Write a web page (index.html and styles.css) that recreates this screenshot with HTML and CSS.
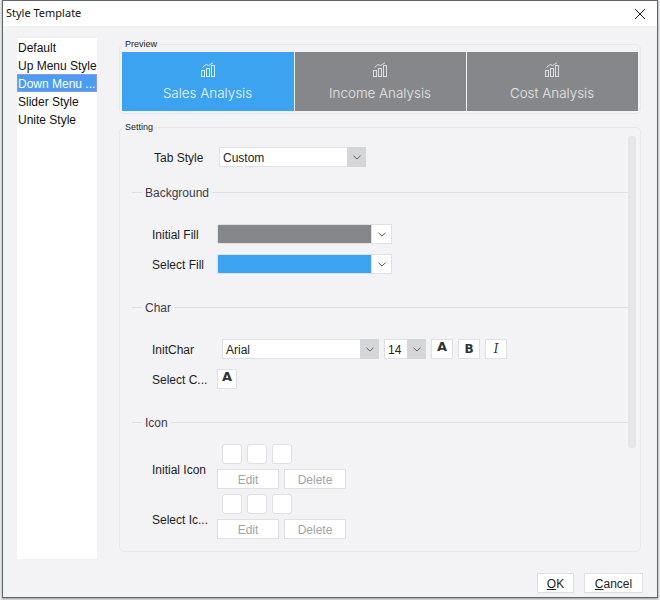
FILE: index.html
```html
<!DOCTYPE html>
<html lang="en">
<head>
<meta charset="utf-8">
<title>Style Template</title>
<link rel="stylesheet" href="styles.css">
</head>
<body>
<svg class="defs" width="0" height="0" aria-hidden="true">
  <symbol id="chart" viewBox="0 0 14 15">
    <path d="M1.5 5.5 L5 2.5 L7.5 3.5 L12 0.8" fill="none" stroke="currentColor" stroke-width="1"/>
    <rect x="0.5" y="8.5" width="3" height="6" fill="none" stroke="currentColor"/>
    <rect x="5.5" y="6.5" width="3" height="8" fill="none" stroke="currentColor"/>
    <rect x="10.5" y="3.5" width="3" height="11" fill="none" stroke="currentColor"/>
  </symbol>
  <symbol id="chev" viewBox="0 0 9 5">
    <path d="M0.5 0.5 L4.5 4.2 L8.5 0.5" fill="none" stroke="currentColor" stroke-width="1"/>
  </symbol>
</svg>
<div class="window">
  <header class="titlebar">
    <span class="title">Style Template</span>
    <svg class="close" width="12" height="12" viewBox="0 0 12 12"><path d="M1 1 L11 11 M11 1 L1 11" stroke="#111" stroke-width="1" fill="none"/></svg>
  </header>
  <div class="body">
    <div class="main">
      <ul class="list">
        <li>Default</li>
        <li>Up Menu Style</li>
        <li class="selected">Down Menu ...</li>
        <li>Slider Style</li>
        <li>Unite Style</li>
      </ul>
      <div class="panels">
        <section class="group preview">
          <span class="legend">Preview</span>
          <div class="tabs">
            <div class="tab active"><svg class="tab-icon"><use href="#chart"/></svg><span>Sales Analysis</span></div>
            <div class="tab"><svg class="tab-icon"><use href="#chart"/></svg><span>Income Analysis</span></div>
            <div class="tab"><svg class="tab-icon"><use href="#chart"/></svg><span>Cost Analysis</span></div>
          </div>
        </section>
        <section class="group setting">
          <span class="legend">Setting</span>
          <div class="thumb"></div>
          <div class="row row-tabstyle">
            <label class="lbl">Tab Style</label>
            <div class="select w-tabstyle"><span class="val">Custom</span><span class="arrow"><svg class="chev"><use href="#chev"/></svg></span></div>
          </div>
          <div class="head head-first"><span>Background</span></div>
          <div class="row after-head">
            <label class="lbl">Initial Fill</label>
            <div class="swatch gray"></div>
            <div class="drop"><svg class="chev"><use href="#chev"/></svg></div>
          </div>
          <div class="row next">
            <label class="lbl">Select Fill</label>
            <div class="swatch blue"></div>
            <div class="drop"><svg class="chev"><use href="#chev"/></svg></div>
          </div>
          <div class="head"><span>Char</span></div>
          <div class="row after-head">
            <label class="lbl">InitChar</label>
            <div class="select w-font"><span class="val">Arial</span><span class="arrow"><svg class="chev"><use href="#chev"/></svg></span></div>
            <div class="select w-size"><span class="val">14</span><span class="arrow"><svg class="chev"><use href="#chev"/></svg></span></div>
            <button class="fmt fmt-a">A</button>
            <button class="fmt fmt-b">B</button>
            <button class="fmt fmt-i">I</button>
          </div>
          <div class="row next">
            <label class="lbl">Select C...</label>
            <button class="fmt fmt-a fmt-single">A</button>
          </div>
          <div class="head"><span>Icon</span></div>
          <div class="icon-row icon-first">
            <label class="lbl">Initial Icon</label>
            <div class="icon-ctl">
              <div class="slots"><i></i><i></i><i></i></div>
              <div class="actions"><button class="act edit">Edit</button><button class="act del">Delete</button></div>
            </div>
          </div>
          <div class="icon-row">
            <label class="lbl">Select Ic...</label>
            <div class="icon-ctl">
              <div class="slots"><i></i><i></i><i></i></div>
              <div class="actions"><button class="act edit">Edit</button><button class="act del">Delete</button></div>
            </div>
          </div>
        </section>
      </div>
    </div>
    <footer class="footer">
      <button class="dlg ok"><u>O</u>K</button>
      <button class="dlg cancel"><u>C</u>ancel</button>
    </footer>
  </div>
</div>
</body>
</html>
```
FILE: styles.css
```css
* { box-sizing: border-box; }
html, body { margin: 0; padding: 0; }
body {
  width: 660px;
  height: 600px;
  background: #e9ebec;
  font: 12px/20px "Liberation Sans", Arial, sans-serif;
  color: #1c1c1f;
  overflow: hidden;
}
.defs { position: absolute; }
.window {
  margin-left: 2px;
  width: 656px;
  height: 598px;
  border: 1px solid #5f6568;
  background: #f3f3f5;
  display: flex;
  flex-direction: column;
  box-shadow: 0 1px 2px rgba(0, 0, 0, .35);
}
.titlebar {
  height: 25px;
  background: #fff;
  display: flex;
  align-items: center;
  justify-content: space-between;
  padding: 0 11px 2px 3px;
  flex: none;
}
.title { font-family: "Noto Sans", sans-serif; font-size: 11px; color: #111; }
.close { margin-top: 2px; }
.body { flex: 1; display: flex; flex-direction: column; }
.main { display: flex; padding: 12px 0 0 14px; gap: 22px; }
.list {
  list-style: none;
  margin: 0;
  padding: 0;
  width: 80px;
  height: 521px;
  background: #fff;
}
.list li { height: 18px; line-height: 18px; padding: 1px 0 0 1px; color: #111; white-space: nowrap; }
.list li.selected { background: #4c9cf4; color: #fff; box-shadow: inset 0 0 0 1px #8c9ae0; }
.panels { width: 522px; }
.group {
  position: relative;
  border: 1px solid #e8e8eb;
  border-radius: 5px;
}
.legend {
  position: absolute;
  left: 4px;
  top: -7px;
  padding: 0 1px;
  background: #f3f3f5;
  font-size: 9px;
  line-height: 12px;
  color: #222;
}
.preview { margin-top: 6px; height: 70px; padding: 7px 2px 0; }
.tabs { display: flex; gap: 1px; height: 59px; width: 516px; }
.tab {
  flex: 1;
  background: #85878b;
  color: #e6e7e9;
  display: flex;
  flex-direction: column;
  align-items: center;
  padding-top: 10px;
  font: 300 13.4px/18px Inter, sans-serif;
}
.tab span { margin-right: 1px; }
.tab.active { flex: none; width: 172px; background: #3ca3f0; color: #eef7fe; }
.tab-icon { width: 14px; height: 15px; margin: 0 1px 7px 0; opacity: .9; }
.setting { margin-top: 13px; height: 425px; padding: 19px 0 0 12px; }
.thumb {
  position: absolute;
  left: 508px;
  top: 8px;
  width: 8px;
  height: 312px;
  border-radius: 3px;
  background: #e6e6e8;
}
.row { display: flex; align-items: center; height: 20px; padding-left: 20px; width: 496px; }
.row-tabstyle { padding-left: 22px; }
.lbl { width: 65px; flex: none; padding-top: 1px; white-space: nowrap; color: #1c1c22; }
.next { margin-top: 10px; }
.after-head { margin-top: 25px; }
.head {
  display: flex;
  align-items: center;
  gap: 3px;
  width: 496px;
  height: 14px;
  margin-top: 26px;
  color: #3a3a44;
}
.head span { padding-top: 1px; }
.head-first { margin-top: 18px; }
.head::before { content: ""; width: 10px; height: 1px; background: #dfdfe3; }
.head::after { content: ""; flex: 1; height: 1px; background: #dfdfe3; }
.select {
  display: flex;
  height: 20px;
  background: #fff;
  border: 1px solid #dfe0e3;
  border-right: 0;
}
.val { flex: 1; padding: 1px 0 0 3px; line-height: 18px; color: #222; }
.arrow { width: 19px; display: flex; align-items: center; justify-content: center; background: #d5d6d9; margin: -1px 0; color: #55575b; }
.chev { width: 8px; height: 5px; display: block; }
.w-tabstyle { width: 147px; }
.w-font { width: 157px; margin-left: 5px; }
.w-size { width: 42px; margin-left: 5px; }
.swatch { width: 155px; height: 20px; border: 1px solid #dfe0e3; border-radius: 2px 0 0 2px; }
.gray { background: #85878b; }
.blue { background: #3ca3f0; }
.drop {
  width: 20px;
  height: 20px;
  background: #fff;
  border: 1px solid #dfe0e3;
  border-left: 0;
  display: flex;
  align-items: center;
  justify-content: center;
  color: #444;
}
.fmt {
  width: 22px;
  height: 20px;
  margin: 0 0 0 5px;
  padding: 0 0 4px;
  background: #fff;
  border: 1px solid #dfe0e3;
  color: #333;
  font: bold 13px/14px "DejaVu Sans", sans-serif;
}
.fmt-b { padding: 0; font-size: 12px; }
.fmt-i { padding: 0; font: italic 12px/14px "DejaVu Serif", serif; }
.fmt-single { width: 20px; margin-left: 0; }
.icon-first { margin-top: 15px; }
.icon-row { display: flex; align-items: flex-end; padding-left: 20px; margin-bottom: 5px; }
.icon-row .lbl { padding-bottom: 9px; box-sizing: content-box; height: 20px; }
.slots { display: flex; gap: 5px; padding-left: 5px; }
.slots i {
  display: block;
  width: 20px;
  height: 20px;
  background: #fff;
  border: 1px solid #dfe0e3;
  border-radius: 3px;
}
.actions { display: flex; gap: 5px; margin-top: 5px; }
.act {
  width: 62px;
  height: 20px;
  padding: 2px 0 0;
  background: #fff;
  border: 1px solid #dfe0e3;
  color: #a2a3a8;
  font: 12px/16px "Liberation Sans", sans-serif;
}
.footer { display: flex; justify-content: flex-end; gap: 10px; padding: 14px 14px 0 0; }
.dlg {
  height: 20px;
  padding: 2px 0 0;
  background: #fff;
  border: 1px solid #dddee1;
  color: #222;
  font: 12px/16px "Liberation Sans", sans-serif;
}
.ok { width: 37px; }
.cancel { width: 59px; }
```
